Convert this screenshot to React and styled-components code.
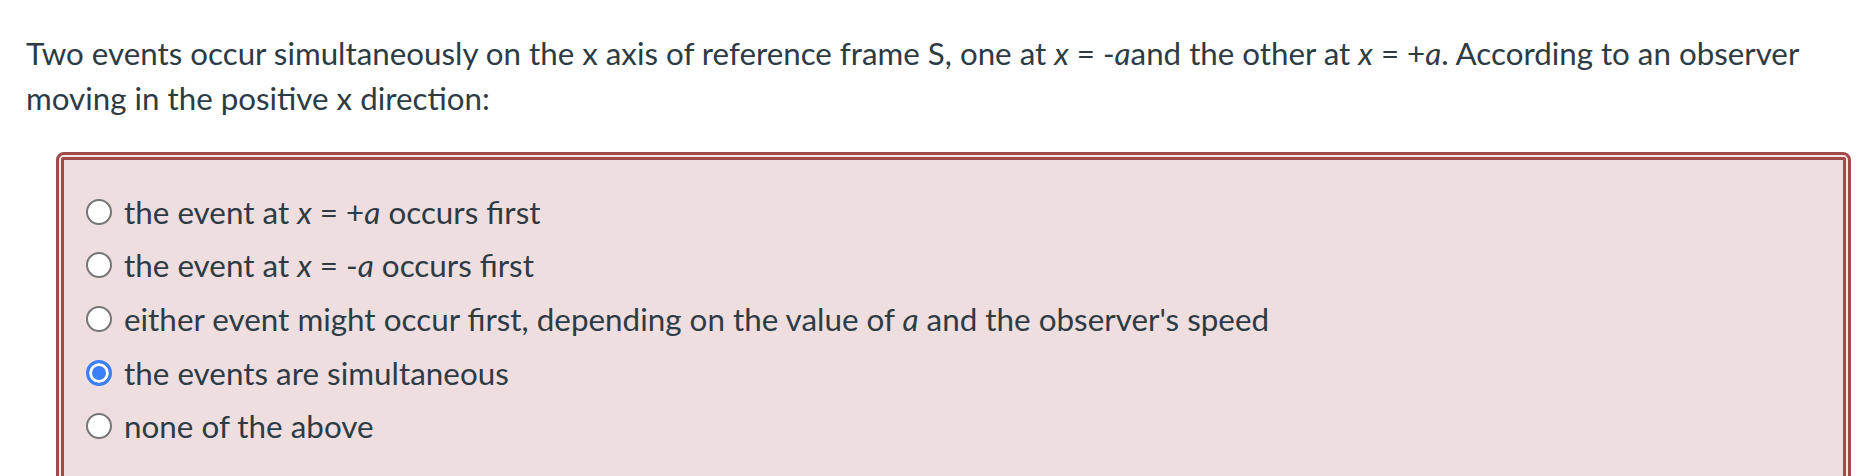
import React, { useState } from 'react';
import styled, { createGlobalStyle } from 'styled-components';

const GlobalStyle = createGlobalStyle`
  html, body {
    margin: 0;
    padding: 0;
    background: #ffffff;
  }
  body {
    font-family: Lato, "Noto Sans", "Liberation Sans", sans-serif;
    color: #2d3b45;
  }
`;

const answers = [
  { id: 1, label: <>the event at <em>x</em> = +<em>a</em> occurs first</> },
  { id: 2, label: <>the event at <em>x</em> = -<em>a</em> occurs first</> },
  {
    id: 3,
    label: (
      <>
        either event might occur first, depending on the value of <em>a</em> and the
        observer's speed
      </>
    ),
  },
  { id: 4, label: <>the events are simultaneous</> },
  { id: 5, label: <>none of the above</> },
];

const Page = styled.div`
  padding-top: 31px;
`;

const Question = styled.p`
  margin: 0;
  padding: 0 50px 0 26px;
  font-size: 31.3px;
  line-height: 45px;

  em {
    font-style: italic;
  }
`;

const AnswerFrame = styled.div`
  margin: 31px 17px 0 56px;
  border: 3px solid #a34b49;
  border-radius: 8px;
  padding: 2px;
  background: #f3e6e7;
`;

const AnswerBox = styled.div`
  border: 3px solid #a34b49;
  border-radius: 2px;
  background: #efdedf;
  padding: 25px 0 60px 22px;
`;

const Row = styled.label`
  display: flex;
  align-items: center;
  gap: 12px;
  height: 53.6px;
  font-size: 31.4px;
  cursor: pointer;

  em {
    font-style: italic;
  }
`;

const Radio = styled.input`
  appearance: none;
  margin: 0;
  flex: 0 0 auto;
  width: 26px;
  height: 26px;
  border-radius: 50%;
  border: 2px solid #767676;
  background: #ffffff;

  &:checked {
    border: 3px solid #3a7ff6;
    background: #3a7ff6;
    box-shadow: inset 0 0 0 3px #ffffff;
  }
`;

export default function App() {
  const [picked, setPicked] = useState(4);

  return (
    <Page>
      <GlobalStyle />
      <Question>
        Two events occur simultaneously on the x axis of reference frame S, one at <em>x</em> = -<em>a</em>and
        the other at <em>x</em> = +<em>a</em>. According to an observer moving in the positive x direction:
      </Question>
      <AnswerFrame>
        <AnswerBox>
          {answers.map((answer) => (
            <Row key={answer.id}>
              <Radio
                type="radio"
                name="answer"
                checked={picked === answer.id}
                onChange={() => setPicked(answer.id)}
              />
              <span>{answer.label}</span>
            </Row>
          ))}
        </AnswerBox>
      </AnswerFrame>
    </Page>
  );
}
